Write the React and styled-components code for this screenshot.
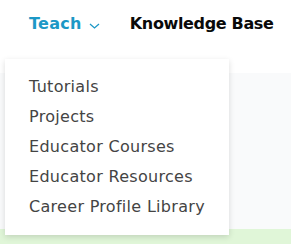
import React from "react";
import styled, { createGlobalStyle } from "styled-components";

const Global = createGlobalStyle`
  html, body { margin: 0; padding: 0; background: #ffffff; }
  body { font-family: "DejaVu Sans", "Open Sans", sans-serif; }
`;

const Page = styled.div`
  position: relative;
  width: 291px;
  height: 244px;
  overflow: hidden;
  display: flex;
  flex-direction: column;
`;

const Header = styled.header`
  height: 73px;
  background: #ffffff;
  display: flex;
  align-items: flex-start;
  padding: 14px 0 0 29px;
  box-sizing: border-box;
  gap: 30px;
`;

const NavItem = styled.a`
  display: flex;
  align-items: center;
  gap: 7px;
  font-family: "DejaVu Sans", sans-serif;
  font-weight: 700;
  font-size: 16px;
  line-height: 20px;
  letter-spacing: ${(p) => (p.$tight ? "-0.35px" : "0.3px")};
  color: ${(p) => (p.$active ? "#1c98c6" : "#0a0a0a")};
  text-decoration: none;
  white-space: nowrap;
`;

const Chevron = styled.svg`
  width: 11px;
  height: 6px;
  margin-top: 4px;
`;

const Section = styled.section`
  height: 156px;
  background: #f9fafb;
`;

const Footer = styled.section`
  flex: 1;
  background: #e0f6d8;
`;

const Dropdown = styled.ul`
  position: absolute;
  left: 5px;
  top: 59px;
  width: 224px;
  height: 176px;
  box-sizing: border-box;
  margin: 0;
  padding: 13px 0 0 24px;
  list-style: none;
  background: #ffffff;
  box-shadow: 0 2px 6px rgba(0, 0, 0, 0.14);
`;

const MenuItem = styled.li`
  font-family: "DejaVu Sans", sans-serif;
  font-size: 16px;
  letter-spacing: 0.3px;
  line-height: 30px;
  color: #444444;
  white-space: nowrap;
`;

const items = [
  "Tutorials",
  "Projects",
  "Educator Courses",
  "Educator Resources",
  "Career Profile Library",
];

export default function App() {
  return (
    <>
      <Global />
      <Page>
        <Header>
          <NavItem $active href="#">
            Teach
            <Chevron viewBox="0 0 11 6" fill="none">
              <path d="M1 1l4.5 4L10 1" stroke="#1c98c6" strokeWidth="1.3" />
            </Chevron>
          </NavItem>
          <NavItem $tight href="#">Knowledge Base</NavItem>
        </Header>
        <Section />
        <Footer />
        <Dropdown>
          {items.map((t) => (
            <MenuItem key={t}>{t}</MenuItem>
          ))}
        </Dropdown>
      </Page>
    </>
  );
}
